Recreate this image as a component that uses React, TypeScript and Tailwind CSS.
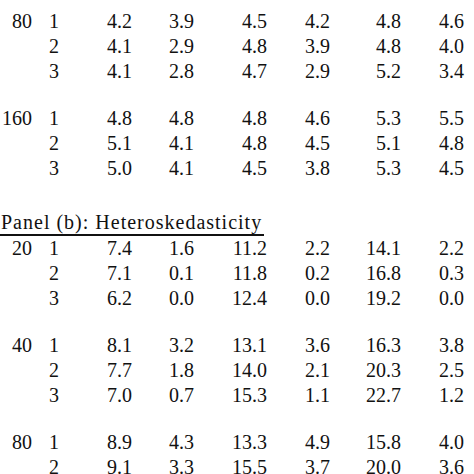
const panelA = [
  {
    n: "80",
    rows: [
      ["1", "4.2", "3.9", "4.5", "4.2", "4.8", "4.6"],
      ["2", "4.1", "2.9", "4.8", "3.9", "4.8", "4.0"],
      ["3", "4.1", "2.8", "4.7", "2.9", "5.2", "3.4"],
    ],
  },
  {
    n: "160",
    rows: [
      ["1", "4.8", "4.8", "4.8", "4.6", "5.3", "5.5"],
      ["2", "5.1", "4.1", "4.8", "4.5", "5.1", "4.8"],
      ["3", "5.0", "4.1", "4.5", "3.8", "5.3", "4.5"],
    ],
  },
];

const panelB = [
  {
    n: "20",
    rows: [
      ["1", "7.4", "1.6", "11.2", "2.2", "14.1", "2.2"],
      ["2", "7.1", "0.1", "11.8", "0.2", "16.8", "0.3"],
      ["3", "6.2", "0.0", "12.4", "0.0", "19.2", "0.0"],
    ],
  },
  {
    n: "40",
    rows: [
      ["1", "8.1", "3.2", "13.1", "3.6", "16.3", "3.8"],
      ["2", "7.7", "1.8", "14.0", "2.1", "20.3", "2.5"],
      ["3", "7.0", "0.7", "15.3", "1.1", "22.7", "1.2"],
    ],
  },
  {
    n: "80",
    rows: [
      ["1", "8.9", "4.3", "13.3", "4.9", "15.8", "4.0"],
      ["2", "9.1", "3.3", "15.5", "3.7", "20.0", "3.6"],
    ],
  },
];

type Group = { n: string; rows: string[][] };

function RowGroup({ group }: { group: Group }) {
  return (
    <div className="grid grid-cols-[32px_27px_73px_62px_73px_63px_71px_63px]">
      {group.rows.map((row, i) => (
        <div key={i} className="contents">
          <div className="h-[25px] text-right">{i === 0 ? group.n : ""}</div>
          {row.map((cell, j) => (
            <div key={j} className="h-[25px] text-right">
              {cell}
            </div>
          ))}
        </div>
      ))}
    </div>
  );
}

export default function App() {
  return (
    <div
      className="w-[474px] h-[474px] overflow-hidden bg-white text-[#111] text-[20px] leading-[25px] pt-[8.5px]"
      style={{ fontFamily: '"Liberation Serif", "Times New Roman", serif' }}
    >
      <div className="flex flex-col gap-[22px]">
        {panelA.map((g) => (
          <RowGroup key={g.n} group={g} />
        ))}
      </div>

      {/* Panel (b) heading with rule */}
      <div className="mt-[30px] w-[264px] border-b-2 border-[#111] leading-[23px] tracking-[1px] pl-[1px] whitespace-nowrap">
        Panel (b): Heteroskedasticity
      </div>

      <div className="flex flex-col gap-[22px]">
        {panelB.map((g) => (
          <RowGroup key={g.n} group={g} />
        ))}
      </div>
    </div>
  );
}
